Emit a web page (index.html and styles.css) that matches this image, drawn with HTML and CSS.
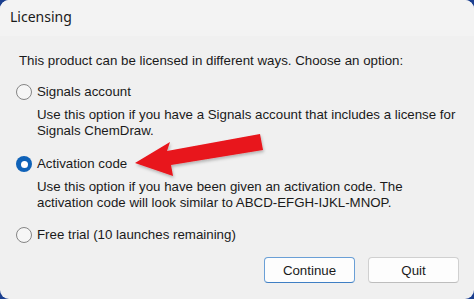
FILE: index.html
```html
<!DOCTYPE html>
<html>
<head>
<meta charset="utf-8">
<link rel="stylesheet" href="styles.css">
</head>
<body>
<div class="window">
  <div class="titlebar">Licensing</div>
  <div class="content">
    <p class="intro">This product can be licensed in different ways. Choose an option:</p>
    <div class="option opt-first">
      <span class="radio"></span><span class="label">Signals account</span>
    </div>
    <p class="desc">Use this option if you have a Signals account that includes a license for Signals ChemDraw.</p>
    <div class="option opt-mid">
      <span class="radio checked"></span><span class="label">Activation code</span>
    </div>
    <p class="desc">Use this option if you have been given an activation code. The activation code will look similar to ABCD-EFGH-IJKL-MNOP.</p>
    <div class="option opt-last">
      <span class="radio"></span><span class="label">Free trial (10 launches remaining)</span>
    </div>
    <div class="buttons">
      <button class="btn default">Continue</button>
      <button class="btn">Quit</button>
    </div>
  </div>
  <svg class="arrow" width="474" height="299" viewBox="0 0 474 299">
    <defs>
      <filter id="sh" x="-20%" y="-20%" width="140%" height="140%">
        <feDropShadow dx="1" dy="2" stdDeviation="1.5" flood-color="#000" flood-opacity="0.25"/>
      </filter>
    </defs>
    <polygon filter="url(#sh)" fill="#e8141b" points="135,163 170,142 167,151 260,134 263,150 171,165 173,176"/>
  </svg>
</div>
</body>
</html>
```
FILE: styles.css
```css
html, body {
  margin: 0;
  padding: 0;
  background: #1b3f8f;
}
body {
  width: 474px;
  height: 299px;
  overflow: hidden;
}
.window {
  position: relative;
  width: 474px;
  height: 299px;
  background: #f0f0f0;
  border-radius: 9px;
  overflow: hidden;
}
.titlebar {
  height: 36px;
  box-sizing: border-box;
  padding: 7px 0 0 10px;
  font-family: "Noto Sans", "Open Sans", sans-serif;
  font-size: 14px;
  line-height: 20px;
  color: #1a1a1a;
  background: #f3f3f3;
}
.content {
  padding: 17px 19px 0 19px;
  font-family: "Liberation Sans", Arial, sans-serif;
  font-size: 13.3px;
  line-height: 16px;
  color: #1a1a1a;
}
.intro {
  margin: 0;
}
.option {
  display: flex;
  align-items: center;
  height: 16px;
  margin-left: -3px;
}
.opt-first { margin-top: 15px; }
.opt-mid { margin-top: 17px; }
.opt-last { margin-top: 16px; }
.radio {
  width: 14px;
  height: 14px;
  border: 1px solid #858585;
  border-radius: 50%;
  background: #f6f6f6;
  margin-right: 5px;
  flex: none;
}
.radio.checked {
  width: 16px;
  height: 16px;
  border: none;
  background: #0f62b8;
  display: flex;
  align-items: center;
  justify-content: center;
}
.radio.checked::after {
  content: "";
  width: 7px;
  height: 7px;
  border-radius: 50%;
  background: #ffffff;
}
.desc {
  margin: 7px 0 0 18px;
  width: 425px;
}
.buttons {
  display: flex;
  justify-content: flex-end;
  gap: 13px;
  margin-top: 14px;
  margin-right: -4px;
}
.btn {
  width: 91px;
  height: 26px;
  box-sizing: border-box;
  border: 1px solid #d0d0d0;
  border-bottom-color: #bdbdbd;
  border-radius: 4px;
  background: #fdfdfd;
  font-family: "Liberation Sans", Arial, sans-serif;
  font-size: 13.3px;
  color: #1a1a1a;
  padding: 0;
}
.btn.default {
  border-color: #6a9fd6;
  border-bottom-color: #3f7fc4;
}
.arrow {
  position: absolute;
  left: 0;
  top: 0;
  pointer-events: none;
}
```
